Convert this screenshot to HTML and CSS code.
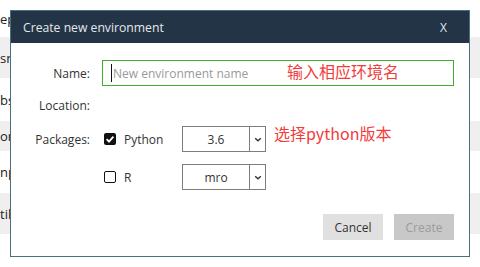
FILE: index.html
```html
<!DOCTYPE html>
<html>
<head>
<meta charset="utf-8">
<link rel="stylesheet" href="styles.css">
</head>
<body>
<div class="page">
  <div class="bg-row r0">ep</div>
  <div class="bg-row r1 alt">sn</div>
  <div class="bg-row r2">bs</div>
  <div class="bg-row r3 alt">or</div>
  <div class="bg-row r4">np</div>
  <div class="bg-row r5 alt">til</div>
  <div class="bg-row r6"></div>
</div>
<div class="dialog">
  <div class="header">
    <span class="title">Create new environment</span>
    <span class="close">X</span>
  </div>
  <div class="body">
    <div class="form">
      <div class="label">Name:</div>
      <div class="input"><span class="caret"></span><span class="placeholder">New environment name</span></div>
      <div class="label loc">Location:</div>
      <div class="loc"></div>
      <div class="label">Packages:</div>
      <div class="pkg">
        <div class="check-wrap"><span class="checkbox checked"><svg viewBox="0 0 12 12" width="12" height="12"><polyline points="2.6,6.2 5,8.6 9.4,3.6" fill="none" stroke="#fff" stroke-width="1.8"/></svg></span><span class="pkg-name">Python</span></div>
        <div class="select"><span class="sel-val">3.6</span><span class="sel-btn"><svg viewBox="0 0 8 5" width="8" height="5"><polyline points="1.2,1.2 4,3.8 6.8,1.2" fill="none" stroke="#333" stroke-width="1.4"/></svg></span></div>
      </div>
      <div class="label"></div>
      <div class="pkg">
        <div class="check-wrap"><span class="checkbox"></span><span class="pkg-name">R</span></div>
        <div class="select"><span class="sel-val">mro</span><span class="sel-btn"><svg viewBox="0 0 8 5" width="8" height="5"><polyline points="1.2,1.2 4,3.8 6.8,1.2" fill="none" stroke="#333" stroke-width="1.4"/></svg></span></div>
      </div>
    </div>
    <div class="actions">
      <button class="btn cancel">Cancel</button>
      <button class="btn create">Create</button>
    </div>
  </div>
  <span class="note note1">输入相应环境名</span>
  <span class="note note2">选择python版本</span>
</div>
</body>
</html>
```
FILE: styles.css
```css
html, body {
  margin: 0;
  padding: 0;
  background: #fff;
}
body {
  width: 480px;
  height: 267px;
  overflow: hidden;
  font-family: "Open Sans", "Noto Sans", sans-serif;
  font-size: 12px;
  color: #333;
}
.page {
  display: flex;
  flex-direction: column;
}
.bg-row {
  display: flex;
  align-items: center;
  font-size: 13px;
  color: #222;
}
.bg-row.alt { background: #efefef; }
.r0 { height: 37px; }
.r1 { height: 41px; }
.r2 { height: 43px; }
.r3 { height: 30px; }
.r4 { height: 42px; }
.r5 { height: 41px; }
.r6 { height: 33px; }

.dialog {
  position: absolute;
  left: 10px;
  top: 10px;
  width: 460px;
  height: 247px;
  box-sizing: border-box;
  border: 1px solid #4b6f82;
  background: #fff;
}
.header {
  height: 32px;
  background: #243447;
  display: flex;
  align-items: center;
  justify-content: space-between;
  padding: 0 22px 0 12px;
}
.title {
  color: #e4e8ec;
  font-size: 12.2px;
}
.close {
  color: #dfe6ee;
  font-size: 12px;
}
.body {
  padding: 17px 15px 0 0;
}
.form {
  display: grid;
  grid-template-columns: 79px 1fr;
  column-gap: 12px;
  row-gap: 12px;
  align-items: center;
}
.label {
  text-align: right;
  color: #333;
}
.loc { height: 16px; line-height: 16px; }
.input {
  height: 26px;
  box-sizing: border-box;
  border: 1px solid #3fae2a;
  display: flex;
  align-items: center;
  padding-left: 8px;
}
.caret {
  width: 1px;
  height: 18px;
  background: #111;
  margin-right: 1px;
}
.placeholder { color: #9a9a9a; }
.pkg {
  display: flex;
  align-items: center;
  height: 26px;
}
.check-wrap {
  width: 80px;
  display: flex;
  align-items: center;
  padding-left: 2px;
  box-sizing: border-box;
}
.checkbox {
  width: 12px;
  height: 12px;
  box-sizing: border-box;
  border: 1.5px solid #111;
  border-radius: 2px;
  display: flex;
}
.checkbox.checked {
  background: #111;
  border: none;
}
.pkg-name { margin-left: 8px; }
.select {
  width: 84px;
  height: 26px;
  box-sizing: border-box;
  border: 1px solid #7d7d7d;
  display: flex;
}
.sel-val {
  flex: 1;
  display: flex;
  align-items: center;
  justify-content: center;
  border-right: 1px solid #7d7d7d;
}
.sel-btn {
  width: 15px;
  display: flex;
  align-items: center;
  justify-content: center;
}
.actions {
  display: flex;
  justify-content: flex-end;
  gap: 11px;
  margin-top: 24px;
}
.btn {
  width: 60px;
  height: 26px;
  border: none;
  font-family: inherit;
  font-size: 12px;
  padding: 0;
}
.cancel { background: #e0e0e0; color: #333; }
.create { background: #c8c8c8; color: #9c9c9c; }
.note {
  position: absolute;
  color: #f23c3c;
  font-family: "Noto Sans CJK SC", sans-serif;
  font-size: 16px;
  line-height: 18px;
  white-space: nowrap;
}
.note1 { left: 276px; top: 51px; }
.note2 { left: 263px; top: 113px; }
```
